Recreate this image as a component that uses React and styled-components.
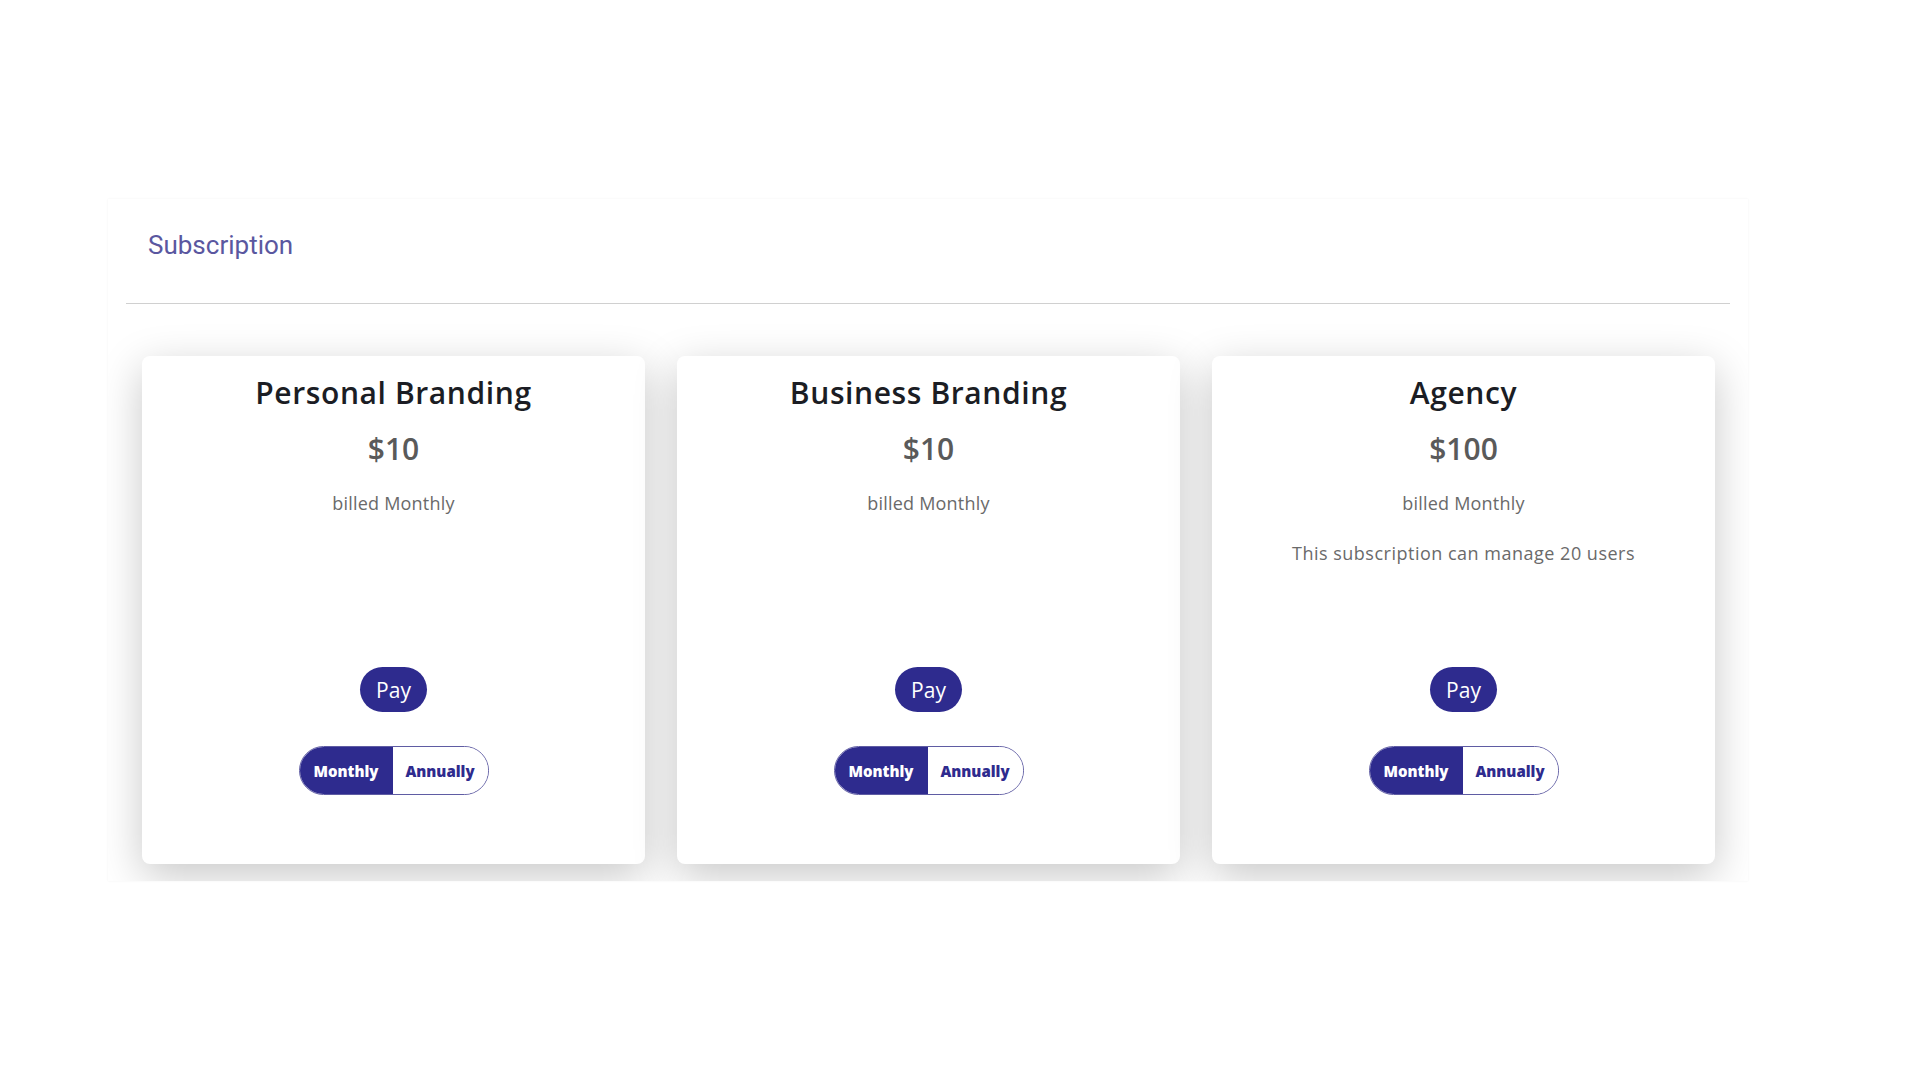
import React, { useState } from "react";
import styled, { createGlobalStyle } from "styled-components";

const GlobalStyle = createGlobalStyle`
  html, body {
    margin: 0;
    padding: 0;
    background: #ffffff;
  }
  body {
    font-family: "Open Sans", "Noto Sans", sans-serif;
  }
  * {
    box-sizing: border-box;
  }
`;

const Page = styled.div`
  width: 1920px;
  height: 1080px;
  padding: 199px 0 0 108px;
  background: #fff;
`;

const Panel = styled.section`
  width: 1640px;
  height: 682px;
  background: #fff;
  overflow: hidden;
  box-shadow: 0 0 2px rgba(0, 0, 0, 0.06);
`;

const Header = styled.div`
  height: 104px;
  padding: 30px 0 0 40px;
`;

const Title = styled.h2`
  margin: 0;
  font-family: Roboto, "Liberation Sans", sans-serif;
  font-size: 26px;
  line-height: 32px;
  font-weight: 400;
  color: #5a57a0;
`;

const Divider = styled.hr`
  margin: 0 18px;
  border: 0;
  border-top: 1px solid #d0d0d0;
`;

const Plans = styled.div`
  display: grid;
  grid-template-columns: repeat(3, 503px);
  gap: 32px;
  padding: 52px 33px 0 34px;
`;

const Card = styled.div`
  height: 508px;
  background: #fff;
  border-radius: 8px;
  box-shadow: 0 12px 44px rgba(0, 0, 0, 0.22);
  display: flex;
  flex-direction: column;
  align-items: center;
  padding-top: 19px;
  text-align: center;
`;

const PlanName = styled.h3`
  margin: 0;
  font-size: 30px;
  line-height: 36px;
  font-weight: 600;
  letter-spacing: 0.6px;
  color: #1b1d24;
`;

const Price = styled.div`
  margin-top: 20px;
  font-size: 30px;
  line-height: 36px;
  font-weight: 600;
  color: #5a5a5a;
`;

const Billed = styled.div`
  margin-top: 24px;
  font-size: 18px;
  line-height: 24px;
  letter-spacing: 0.2px;
  color: #6a6a6a;
`;

const Details = styled.div`
  height: 152px;
  padding-top: 26px;
  font-size: 18px;
  line-height: 24px;
  letter-spacing: 0.5px;
  color: #6a6a6a;
`;

const PayButton = styled.button`
  height: 45px;
  padding: 0 16px;
  border: 0;
  border-radius: 23px;
  background: #2e2b8e;
  color: #fff;
  font-family: inherit;
  font-size: 21px;
  font-weight: 500;
  cursor: pointer;
`;

const Toggle = styled.div`
  margin-top: 34px;
  display: flex;
  height: 49px;
  border: 1.5px solid #5f5ca3;
  border-radius: 25px;
  overflow: hidden;
`;

const ToggleOption = styled.button`
  width: ${(p) => p.$w}px;
  border: 0;
  background: ${(p) => (p.$active ? "#2e2b8e" : "#fff")};
  color: ${(p) => (p.$active ? "#fff" : "#2e2b8e")};
  font-family: inherit;
  font-size: 15px;
  font-weight: 800;
  cursor: pointer;
`;

const plans = [
  { name: "Personal Branding", price: "$10" },
  { name: "Business Branding", price: "$10" },
  { name: "Agency", price: "$100", note: "This subscription can manage 20 users" },
];

const PlanCard = ({ plan }) => {
  const [period, setPeriod] = useState("monthly");
  return (
    <Card>
      <PlanName>{plan.name}</PlanName>
      <Price>{plan.price}</Price>
      <Billed>billed Monthly</Billed>
      <Details>{plan.note}</Details>
      <PayButton>Pay</PayButton>
      <Toggle>
        <ToggleOption $w={93} $active={period === "monthly"} onClick={() => setPeriod("monthly")}>
          Monthly
        </ToggleOption>
        <ToggleOption $w={95} $active={period === "annually"} onClick={() => setPeriod("annually")}>
          Annually
        </ToggleOption>
      </Toggle>
    </Card>
  );
};

const App = () => {
  return (
    <Page>
      <GlobalStyle />
      <Panel>
        <Header>
          <Title>Subscription</Title>
        </Header>
        <Divider />
        <Plans>
          {plans.map((plan) => (
            <PlanCard key={plan.name} plan={plan} />
          ))}
        </Plans>
      </Panel>
    </Page>
  );
};

export default App;
